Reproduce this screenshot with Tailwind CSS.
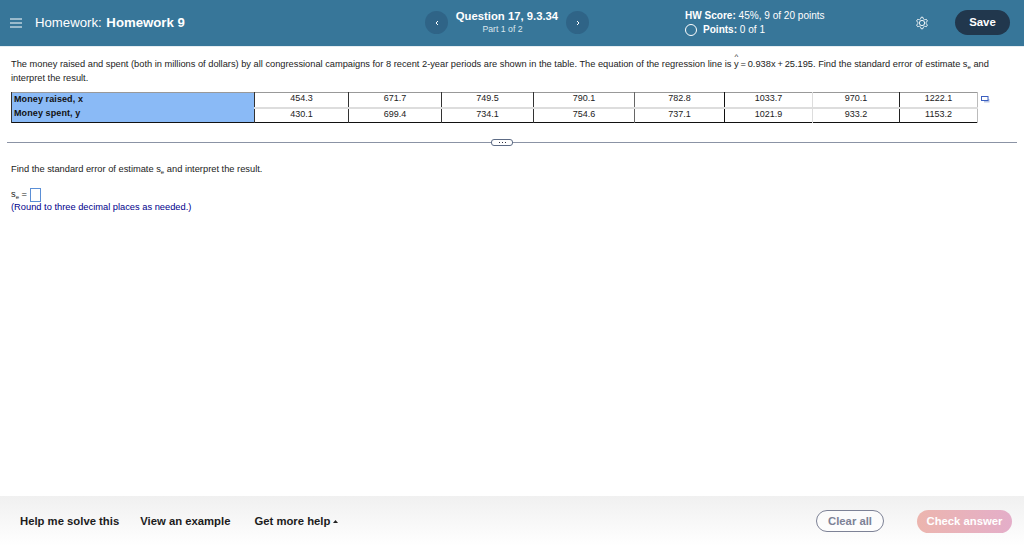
<!DOCTYPE html>
<html lang="en">
<head>
<meta charset="UTF-8">
<title>Homework 9</title>
<script src="https://cdn.jsdelivr.net/npm/@tailwindcss/browser@4"></script>
</head>
<body class="font-['Liberation_Sans',Arial,sans-serif] bg-white text-[#222]">
<div class="flex flex-col h-[546px] w-[1024px] overflow-hidden">

  <!-- Top bar -->
  <div class="flex items-center shrink-0 h-[47px] pb-px bg-[#377699] text-white border-b border-[#e6edf1]">
    <svg class="ml-[10px] w-[12px] h-[10px]" viewBox="0 0 12 10" fill="none" stroke="#fff" stroke-width="1"><path d="M0 1h12M0 5h12M0 9h12"/></svg>
    <div class="ml-[13px] w-[390px] text-[13.2px]">Homework: <span class="font-bold ml-[1px]">Homework 9</span></div>
    <button class="w-[23px] h-[23px] rounded-full bg-[#2f6487] flex items-center justify-center">
      <svg class="w-[6px] h-[6px]" viewBox="0 0 6 6" fill="none" stroke="#fff" stroke-width="1"><path d="M4 1 2 3l2 2"/></svg>
    </button>
    <div class="w-[118px] text-center">
      <div class="text-[11.3px] font-bold leading-[14px] mt-[-1px]">Question 17, 9.3.34</div>
      <div class="text-[8.7px] leading-[12px] text-[#dbe7ee] pr-[9px]">Part 1 of 2</div>
    </div>
    <button class="w-[23px] h-[23px] rounded-full bg-[#2f6487] flex items-center justify-center">
      <svg class="w-[6px] h-[6px]" viewBox="0 0 6 6" fill="none" stroke="#fff" stroke-width="1"><path d="M2 1l2 2-2 2"/></svg>
    </button>
    <div class="ml-[96px] w-[230px] text-[10.05px]">
      <div class="leading-[13px]"><span class="font-bold">HW Score:</span> 45%, 9 of 20 points</div>
      <div class="flex items-center leading-[13px] mt-[1px]">
        <span class="w-[12px] h-[12px] rounded-full border-[1.5px] border-white mr-[6px]"></span>
        <span><span class="font-bold">Points:</span> 0 of 1</span>
      </div>
    </div>
    <svg class="w-[14px] h-[14px]" viewBox="0 0 24 24" fill="none" stroke="#fff" stroke-width="1.6" stroke-linejoin="round"><path d="M12.22 2h-.44a2 2 0 0 0-2 2v.18a2 2 0 0 1-1 1.73l-.43.25a2 2 0 0 1-2 0l-.15-.08a2 2 0 0 0-2.73.73l-.22.38a2 2 0 0 0 .73 2.73l.15.1a2 2 0 0 1 1 1.72v.51a2 2 0 0 1-1 1.74l-.15.09a2 2 0 0 0-.73 2.73l.22.38a2 2 0 0 0 2.73.73l.15-.08a2 2 0 0 1 2 0l.43.25a2 2 0 0 1 1 1.73V20a2 2 0 0 0 2 2h.44a2 2 0 0 0 2-2v-.18a2 2 0 0 1 1-1.73l.43-.25a2 2 0 0 1 2 0l.15.08a2 2 0 0 0 2.73-.73l.22-.39a2 2 0 0 0-.73-2.73l-.15-.08a2 2 0 0 1-1-1.74v-.5a2 2 0 0 1 1-1.74l.15-.09a2 2 0 0 0 .73-2.73l-.22-.38a2 2 0 0 0-2.73-.73l-.15.08a2 2 0 0 1-2 0l-.43-.25a2 2 0 0 1-1-1.73V4a2 2 0 0 0-2-2z"/><circle cx="12" cy="12" r="4.5"/></svg>
    <button class="ml-[26px] w-[55px] h-[25px] rounded-full bg-[#21374d] text-[11.4px] font-bold">Save</button>
  </div>

  <!-- Question text -->
  <div class="pl-[11px] pt-[10px] text-[9.27px] leading-[14px] w-[1000px]">
    <p>The money raised and spent (both in millions of dollars) by all congressional campaigns for 8 recent 2-year periods are shown in the table. The equation of the regression line is <span class="relative inline-block">y<span class="absolute left-0 top-[-7px] w-full text-center text-[8px]">^</span></span>&#8201;=&#8201;0.938x&#8201;+&#8201;25.195. Find the standard error of estimate s<sub class="text-[6px] bottom-[-2px]">e</sub> and interpret the result.</p>
  </div>

  <!-- Data table -->
  <div class="flex items-start pl-[11px] mt-[7px]">
    <table class="table-fixed border-collapse w-[966px] text-[9px] leading-[11px] text-center">
      <colgroup>
        <col class="w-[243px]"><col class="w-[94px]"><col class="w-[93px]"><col class="w-[92px]"><col class="w-[101px]"><col class="w-[90px]"><col class="w-[88px]"><col class="w-[87px]"><col class="w-[78px]">
      </colgroup>
      <tbody>
        <tr class="h-[15px] border-t border-[#999]">
          <th class="bg-[#8abaf6] border-l border-[#333] text-left pl-[2px] pb-[2px] font-bold text-[#111] tracking-[0.1px]">Money raised, x</th>
          <td class="border-l border-[#333] border-b-2 border-b-[#ddd] pb-[2px]">454.3</td>
          <td class="border-l border-[#333] border-b-2 border-b-[#ddd] pb-[2px]">671.7</td>
          <td class="border-l border-[#333] border-b-2 border-b-[#ddd] pb-[2px]">749.5</td>
          <td class="border-l border-[#333] border-b-2 border-b-[#ddd] pb-[2px]">790.1</td>
          <td class="border-l border-[#666] border-b-2 border-b-[#ddd] pb-[2px]">782.8</td>
          <td class="border-l border-[#111] border-b-2 border-b-[#ddd] pb-[2px]">1033.7</td>
          <td class="border-l border-[#ddd] border-b-2 border-b-[#ddd] pb-[2px]">970.1</td>
          <td class="border-l border-[#222] border-r border-r-[#bbb] border-b-2 border-b-[#ddd] pb-[2px]">1222.1</td>
        </tr>
        <tr class="h-[15px] border-b border-[#111]">
          <th class="bg-[#8abaf6] border-l border-[#333] text-left pl-[2px] pb-[2px] font-bold text-[#111] tracking-[0.1px]">Money spent, y</th>
          <td class="border-l border-[#333] pb-[2px]">430.1</td>
          <td class="border-l border-[#333] pb-[2px]">699.4</td>
          <td class="border-l border-[#333] pb-[2px]">734.1</td>
          <td class="border-l border-[#333] pb-[2px]">754.6</td>
          <td class="border-l border-[#666] pb-[2px]">737.1</td>
          <td class="border-l border-[#111] pb-[2px]">1021.9</td>
          <td class="border-l border-[#ddd] pb-[2px]">933.2</td>
          <td class="border-l border-[#222] border-r border-r-[#bbb] pb-[2px]">1153.2</td>
        </tr>
      </tbody>
    </table>
    <svg class="ml-[3px] mt-[4px] w-[9px] h-[7px]" viewBox="0 0 9 7"><rect x="3" y="3" width="5.5" height="3.5" fill="#b9c6e6"/><rect x="0.5" y="0.5" width="6.5" height="4" fill="#fff" stroke="#3b5fc0"/></svg>
  </div>

  <!-- Divider -->
  <div class="relative mt-[19px] mx-[7px] h-px bg-[#8b93a5]">
    <div class="absolute left-[484px] top-[-3px] w-[22px] h-[7px] rounded-[3px] bg-white border border-[#5d6b85] flex items-center justify-center gap-[2px]">
      <span class="w-[1px] h-[1px] bg-[#334]"></span><span class="w-[1px] h-[1px] bg-[#334]"></span><span class="w-[1px] h-[1px] bg-[#334]"></span>
    </div>
  </div>

  <!-- Answer area -->
  <div class="pl-[11px] pt-[19px] text-[9.3px]">
    <p class="leading-[14px]">Find the standard error of estimate s<sub class="text-[6px] bottom-[-2px]">e</sub> and interpret the result.</p>
    <div class="flex items-center mt-[11px] h-[15px]">
      <span>s<sub class="text-[6px] bottom-[-2px]">e</sub> =</span>
      <span class="ml-[3px] w-[11px] h-[14px] border border-[#5b8fd6]"></span>
    </div>
    <p class="text-[#00008b] leading-[13px] mt-[-1px]">(Round to three decimal places as needed.)</p>
  </div>

  <!-- Footer -->
  <div class="mt-auto h-[50px] shrink-0 flex items-center bg-gradient-to-b from-[#f0f0f0] to-white text-[11.3px] font-bold text-[#1c1c1c]">
    <span class="ml-[20px]">Help me solve this</span>
    <span class="ml-[21px]">View an example</span>
    <span class="ml-[24px] flex items-center">Get more help
      <svg class="ml-[3px] w-[5px] h-[3px]" viewBox="0 0 5 3"><path d="M2.5 0l2.5 3H0z" fill="#222"/></svg>
    </span>
    <button class="ml-auto w-[68px] h-[22px] rounded-full border border-[#7d8296] bg-white/60 text-[#7d8296] font-bold">Clear all</button>
    <button class="ml-[33px] mr-[12px] w-[95px] h-[23px] rounded-full bg-gradient-to-r from-[#ecb5ae] to-[#e4aec9] text-white font-bold">Check answer</button>
  </div>
</div>
</body>
</html>
